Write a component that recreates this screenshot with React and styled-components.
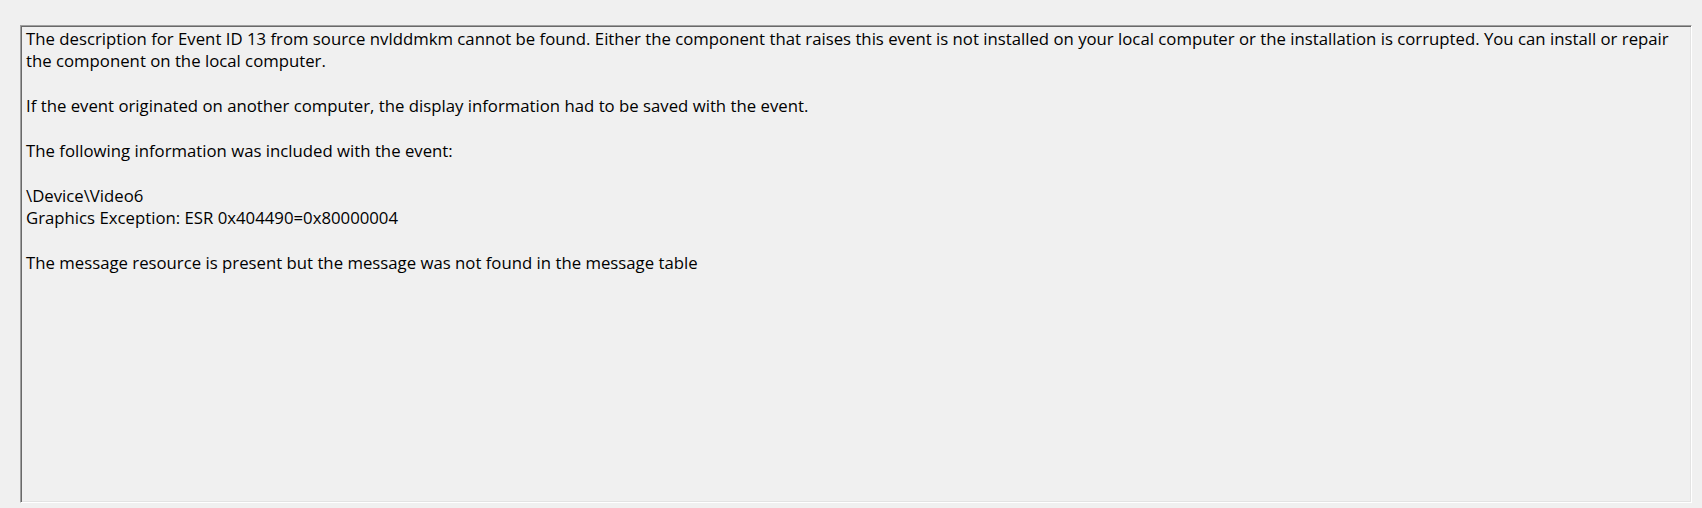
import React from "react";
import styled, { createGlobalStyle } from "styled-components";

const Global = createGlobalStyle`
  html, body { margin: 0; padding: 0; background: #f0f0f0; }
  body { width: 1702px; height: 508px; overflow: hidden; }
`;

const Page = styled.div`
  box-sizing: border-box;
  width: 1702px;
  height: 508px;
  padding: 25px 10px 5px 20px;
  background: #f0f0f0;
`;

const Panel = styled.div`
  box-sizing: border-box;
  width: 1672px;
  height: 478px;
  background: #f0f0f0;
  border-style: solid;
  border-width: 1px;
  border-color: #a0a0a0 #ffffff #ffffff #a0a0a0;
  box-shadow: inset 1px 1px 0 #696969, inset -1px -1px 0 #e3e3e3;
  padding: 2px 4px 0 5px;
  overflow: hidden;
`;

const Line = styled.div`
  font-family: "Open Sans", "Noto Sans", sans-serif;
  font-size: 16.75px;
  line-height: 22.4px;
  height: 22.4px;
  color: #000;
  white-space: pre;
`;

const lines = [
  "The description for Event ID 13 from source nvlddmkm cannot be found. Either the component that raises this event is not installed on your local computer or the installation is corrupted. You can install or repair",
  "the component on the local computer.",
  "",
  "If the event originated on another computer, the display information had to be saved with the event.",
  "",
  "The following information was included with the event:",
  "",
  "\\Device\\Video6",
  "Graphics Exception: ESR 0x404490=0x80000004",
  "",
  "The message resource is present but the message was not found in the message table",
];

export default function App() {
  return (
    <Page>
      <Global />
      <Panel>
        {lines.map((t, i) => (
          <Line key={i}>{t || " "}</Line>
        ))}
      </Panel>
    </Page>
  );
}
